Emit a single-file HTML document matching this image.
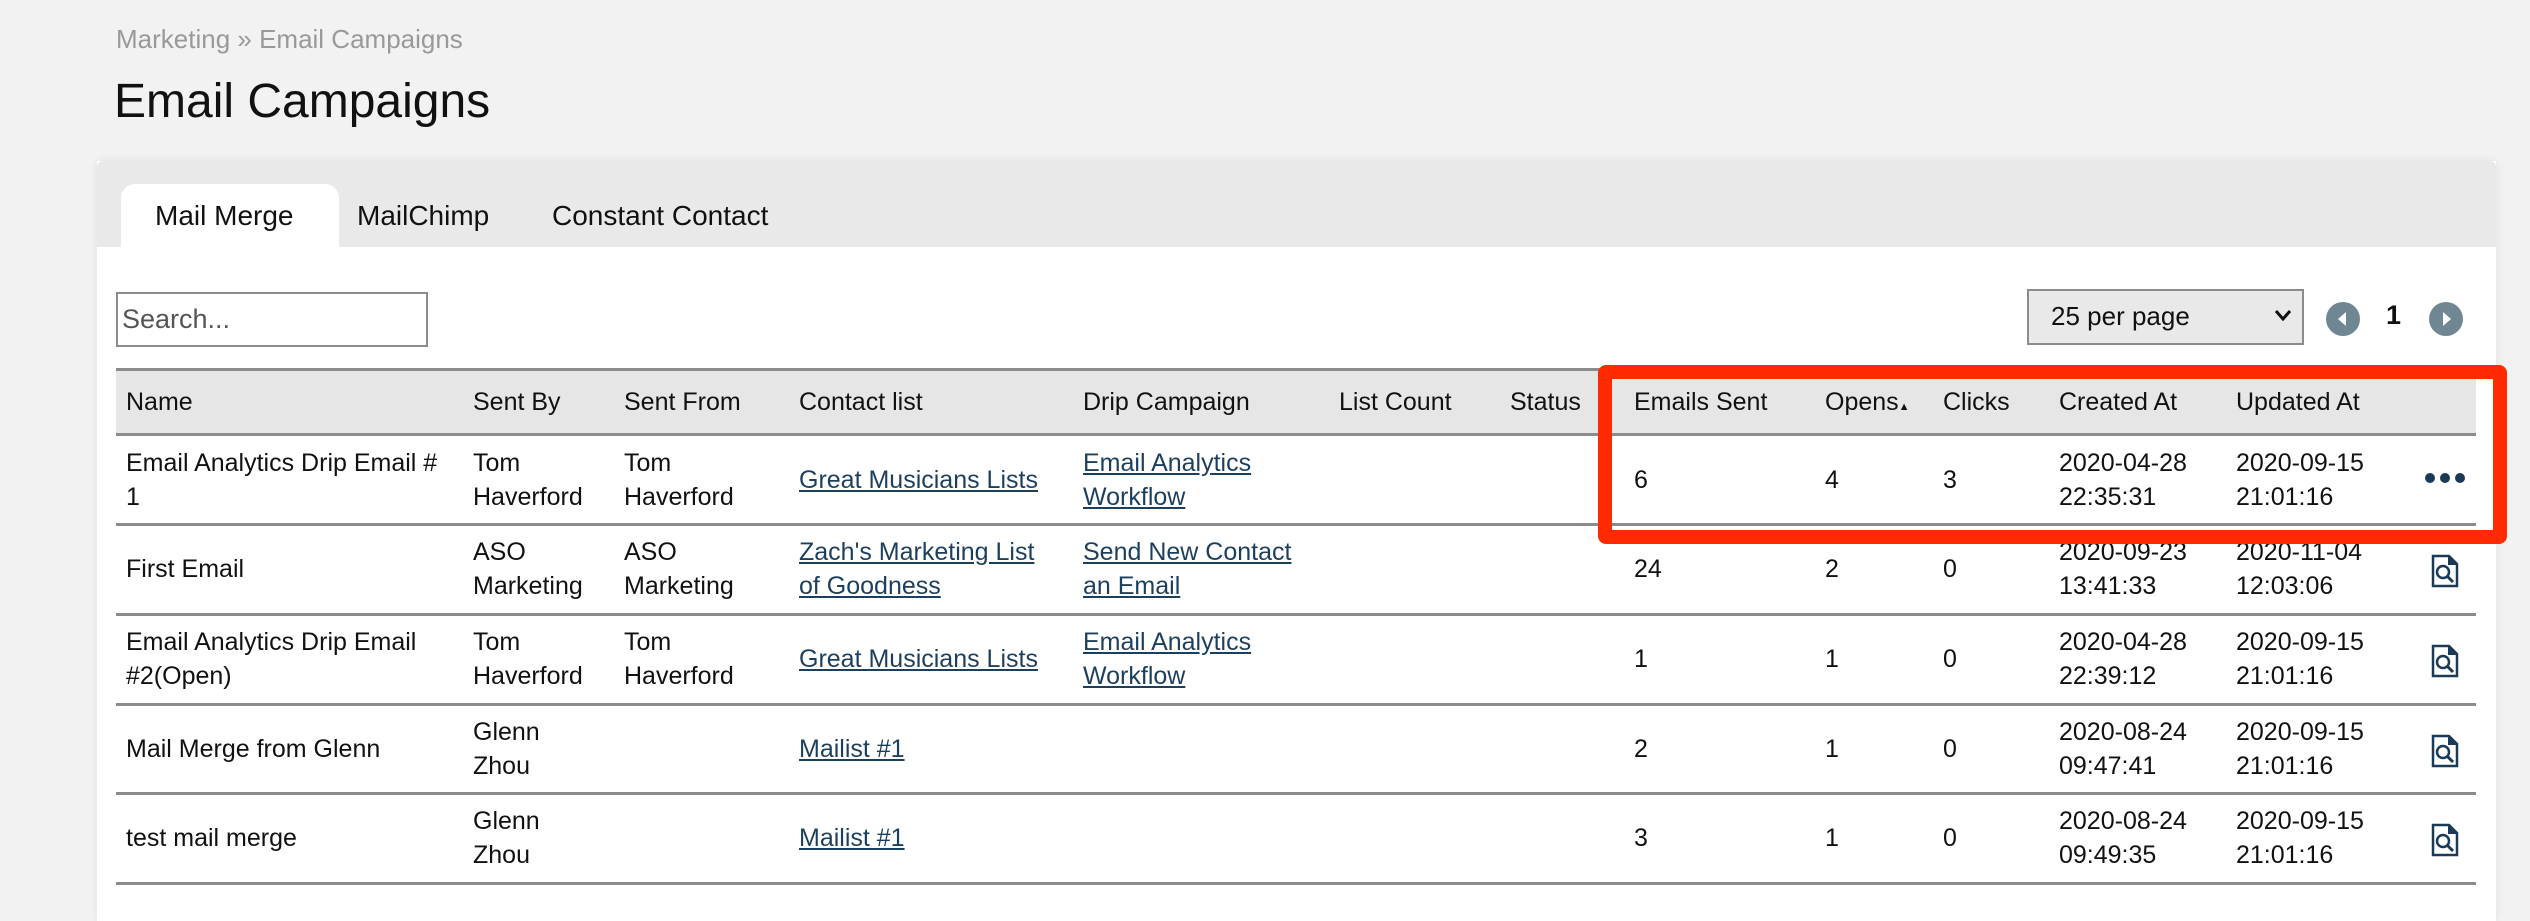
<!DOCTYPE html>
<html><head><meta charset="utf-8"><style>
*{box-sizing:border-box;margin:0;padding:0}
body{width:2530px;height:896px;background:#f2f2f2;font-family:"Liberation Sans",sans-serif;color:#111;position:relative;overflow:hidden}
.a{position:absolute;white-space:nowrap}
.t{font-size:25px;line-height:34px}
a{color:#1d3f5e;text-decoration:underline}
.hl{position:absolute;left:116px;width:2360px;height:3px;background:#8c8c8c}
.ic{position:absolute;left:2430px}
</style></head><body>
<div class="a" style="left:116px;top:24px;font-size:26px;color:#999">Marketing » Email Campaigns</div>
<div class="a" style="left:114px;top:74px;font-size:48px;color:#111">Email Campaigns</div>
<div class="a" style="left:97px;top:161px;width:2399px;height:760px;background:#fff;box-shadow:0 0 8px rgba(0,0,0,.08)"></div>
<div class="a" style="left:97px;top:161px;width:2399px;height:86px;background:#e9e9e9;border-radius:6px 6px 0 0"></div>
<div class="a" style="left:121px;top:184px;width:218px;height:64px;background:#fff;border-radius:14px 14px 0 0"></div>
<div class="a" style="left:155px;top:200px;font-size:28px">Mail Merge</div>
<div class="a" style="left:357px;top:200px;font-size:28px">MailChimp</div>
<div class="a" style="left:552px;top:200px;font-size:28px">Constant Contact</div>
<div class="a" style="left:116px;top:292px;width:312px;height:55px;border:2px solid #8c8c8c;background:#fff"></div>
<div class="a" style="left:122px;top:304px;font-size:27px;color:#555">Search...</div>
<div class="a" style="left:2027px;top:289px;width:277px;height:56px;border:2px solid #8c8c8c;background:#e9e9e9"></div>
<div class="a" style="left:2051px;top:301px;font-size:26px">25 per page</div>
<svg class="a" style="left:2274px;top:308px" width="18" height="14"><path d="M2 3l7 8 7-8" stroke="#111" stroke-width="3" fill="none"/></svg>
<svg class="a" style="left:2326px;top:302px" width="34" height="34"><circle cx="17" cy="17" r="17" fill="#6f8793"/><path d="M20 10l-8 7 8 7z" fill="#fff"/></svg>
<div class="a" style="left:2386px;top:300px;font-size:27px;font-weight:bold">1</div>
<svg class="a" style="left:2429px;top:302px" width="34" height="34"><circle cx="17" cy="17" r="17" fill="#6f8793"/><path d="M14 10l8 7-8 7z" fill="#fff"/></svg>

<div class="a" style="left:116px;top:369px;width:2360px;height:66px;background:#e6e6e6"></div>
<div class="hl" style="top:368px"></div>
<div class="hl" style="top:433px"></div>
<div class="hl" style="top:523px"></div>
<div class="hl" style="top:613px"></div>
<div class="hl" style="top:703px"></div>
<div class="hl" style="top:792px"></div>
<div class="hl" style="top:882px"></div>

<div class="a t" style="top:385px;left:126px">Name</div>
<div class="a t" style="top:385px;left:473px">Sent By</div>
<div class="a t" style="top:385px;left:624px">Sent From</div>
<div class="a t" style="top:385px;left:799px">Contact list</div>
<div class="a t" style="top:385px;left:1083px">Drip Campaign</div>
<div class="a t" style="top:385px;left:1339px">List Count</div>
<div class="a t" style="top:385px;left:1510px">Status</div>
<div class="a t" style="top:385px;left:1634px">Emails Sent</div>
<div class="a t" style="top:385px;left:1825px">Opens<span style="font-size:11px">▲</span></div>
<div class="a t" style="top:385px;left:1943px">Clicks</div>
<div class="a t" style="top:385px;left:2059px">Created At</div>
<div class="a t" style="top:385px;left:2236px">Updated At</div>

<div class="a t" style="top:446px;left:126px">Email Analytics Drip Email #<br>1</div>
<div class="a t" style="top:446px;left:473px">Tom<br>Haverford</div>
<div class="a t" style="top:446px;left:624px">Tom<br>Haverford</div>
<div class="a t" style="top:463px;left:799px"><a>Great Musicians Lists</a></div>
<div class="a t" style="top:446px;left:1083px"><a>Email Analytics</a><br><a>Workflow</a></div>
<div class="a t" style="top:463px;left:1634px">6</div>
<div class="a t" style="top:463px;left:1825px">4</div>
<div class="a t" style="top:463px;left:1943px">3</div>
<div class="a t" style="top:446px;left:2059px">2020-04-28<br>22:35:31</div>
<div class="a t" style="top:446px;left:2236px">2020-09-15<br>21:01:16</div>
<svg class="a" style="left:2424px;top:472px" width="42" height="12"><circle cx="6" cy="6" r="5" fill="#1b3a57"/><circle cx="21" cy="6" r="5" fill="#1b3a57"/><circle cx="36" cy="6" r="5" fill="#1b3a57"/></svg>

<div class="a t" style="top:552px;left:126px">First Email</div>
<div class="a t" style="top:535px;left:473px">ASO<br>Marketing</div>
<div class="a t" style="top:535px;left:624px">ASO<br>Marketing</div>
<div class="a t" style="top:535px;left:799px"><a>Zach's Marketing List</a><br><a>of Goodness</a></div>
<div class="a t" style="top:535px;left:1083px"><a>Send New Contact</a><br><a>an Email</a></div>
<div class="a t" style="top:552px;left:1634px">24</div>
<div class="a t" style="top:552px;left:1825px">2</div>
<div class="a t" style="top:552px;left:1943px">0</div>
<div class="a t" style="top:535px;left:2059px">2020-09-23<br>13:41:33</div>
<div class="a t" style="top:535px;left:2236px">2020-11-04<br>12:03:06</div>

<div class="a t" style="top:625px;left:126px">Email Analytics Drip Email<br>#2(Open)</div>
<div class="a t" style="top:625px;left:473px">Tom<br>Haverford</div>
<div class="a t" style="top:625px;left:624px">Tom<br>Haverford</div>
<div class="a t" style="top:642px;left:799px"><a>Great Musicians Lists</a></div>
<div class="a t" style="top:625px;left:1083px"><a>Email Analytics</a><br><a>Workflow</a></div>
<div class="a t" style="top:642px;left:1634px">1</div>
<div class="a t" style="top:642px;left:1825px">1</div>
<div class="a t" style="top:642px;left:1943px">0</div>
<div class="a t" style="top:625px;left:2059px">2020-04-28<br>22:39:12</div>
<div class="a t" style="top:625px;left:2236px">2020-09-15<br>21:01:16</div>

<div class="a t" style="top:732px;left:126px">Mail Merge from Glenn</div>
<div class="a t" style="top:715px;left:473px">Glenn<br>Zhou</div>
<div class="a t" style="top:732px;left:799px"><a>Mailist #1</a></div>
<div class="a t" style="top:732px;left:1634px">2</div>
<div class="a t" style="top:732px;left:1825px">1</div>
<div class="a t" style="top:732px;left:1943px">0</div>
<div class="a t" style="top:715px;left:2059px">2020-08-24<br>09:47:41</div>
<div class="a t" style="top:715px;left:2236px">2020-09-15<br>21:01:16</div>

<div class="a t" style="top:821px;left:126px">test mail merge</div>
<div class="a t" style="top:804px;left:473px">Glenn<br>Zhou</div>
<div class="a t" style="top:821px;left:799px"><a>Mailist #1</a></div>
<div class="a t" style="top:821px;left:1634px">3</div>
<div class="a t" style="top:821px;left:1825px">1</div>
<div class="a t" style="top:821px;left:1943px">0</div>
<div class="a t" style="top:804px;left:2059px">2020-08-24<br>09:49:35</div>
<div class="a t" style="top:804px;left:2236px">2020-09-15<br>21:01:16</div>

<svg class="ic" style="top:554px" width="30" height="34" viewBox="0 0 30 34"><path d="M3 2h16l8 8v22H3z" fill="none" stroke="#1b3a57" stroke-width="2.5"/><path d="M18 2v9h9z" fill="#1b3a57"/><circle cx="13" cy="18" r="6" fill="none" stroke="#1b3a57" stroke-width="2.5"/><path d="M17 22l6 6" stroke="#1b3a57" stroke-width="3"/></svg>
<svg class="ic" style="top:644px" width="30" height="34" viewBox="0 0 30 34"><path d="M3 2h16l8 8v22H3z" fill="none" stroke="#1b3a57" stroke-width="2.5"/><path d="M18 2v9h9z" fill="#1b3a57"/><circle cx="13" cy="18" r="6" fill="none" stroke="#1b3a57" stroke-width="2.5"/><path d="M17 22l6 6" stroke="#1b3a57" stroke-width="3"/></svg>
<svg class="ic" style="top:734px" width="30" height="34" viewBox="0 0 30 34"><path d="M3 2h16l8 8v22H3z" fill="none" stroke="#1b3a57" stroke-width="2.5"/><path d="M18 2v9h9z" fill="#1b3a57"/><circle cx="13" cy="18" r="6" fill="none" stroke="#1b3a57" stroke-width="2.5"/><path d="M17 22l6 6" stroke="#1b3a57" stroke-width="3"/></svg>
<svg class="ic" style="top:823px" width="30" height="34" viewBox="0 0 30 34"><path d="M3 2h16l8 8v22H3z" fill="none" stroke="#1b3a57" stroke-width="2.5"/><path d="M18 2v9h9z" fill="#1b3a57"/><circle cx="13" cy="18" r="6" fill="none" stroke="#1b3a57" stroke-width="2.5"/><path d="M17 22l6 6" stroke="#1b3a57" stroke-width="3"/></svg>

<div class="a" style="left:1598px;top:365px;width:909px;height:179px;border:14px solid #ff2a00;border-radius:8px"></div>
</body></html>
